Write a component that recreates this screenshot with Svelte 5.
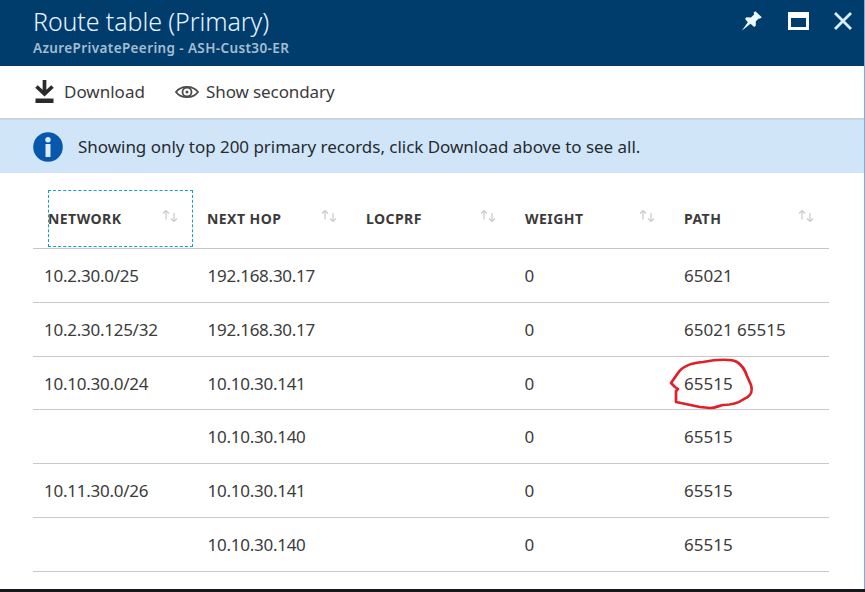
<script>
  const columns = ['NETWORK', 'NEXT HOP', 'LOCPRF', 'WEIGHT', 'PATH'];
  const rows = [
    ['10.2.30.0/25', '192.168.30.17', '', '0', '65021'],
    ['10.2.30.125/32', '192.168.30.17', '', '0', '65021 65515'],
    ['10.10.30.0/24', '10.10.30.141', '', '0', '65515'],
    ['', '10.10.30.140', '', '0', '65515'],
    ['10.11.30.0/26', '10.10.30.141', '', '0', '65515'],
    ['', '10.10.30.140', '', '0', '65515']
  ];
</script>

<main class="blade">
  <header class="titlebar">
    <div class="titles">
      <h1>Route table (Primary)</h1>
      <p>AzurePrivatePeering - ASH-Cust30-ER</p>
    </div>
    <div class="controls">
      <svg width="22" height="22" viewBox="0 0 22 22" fill="#eef8ff">
        <path d="M14.4 1.2 20.8 7.3 18.8 8.8 17.7 8.5 14.8 11.6 14.8 15.6 13.2 17 9.5 13.8 0.8 20.7 6.8 12.2 4 8.8 5.6 7.3 9.9 7.6 13.1 4.5 12.7 2.6Z" />
      </svg>
      <svg width="21" height="18" viewBox="0 0 21 18">
        <path d="M0 0H21V18H0ZM3 6V15H18V6Z" fill="#fff" fill-rule="evenodd" />
      </svg>
      <svg width="18" height="18" viewBox="0 0 18 18">
        <path d="M1 1 17 17M17 1 1 17" stroke="#d9efff" stroke-width="2.8" />
      </svg>
    </div>
  </header>

  <nav class="toolbar">
    <button class="download">
      <svg width="19" height="24" viewBox="0 0 19 24">
        <path d="M9.5 0V14M1.5 6.5 9.5 14 17.5 6.5" fill="none" stroke="#2a2a2a" stroke-width="3.7" />
        <rect x=".5" y="18.5" width="18" height="4.5" fill="#2a2a2a" />
      </svg>
      <span>Download</span>
    </button>
    <button class="secondary">
      <svg width="24" height="14" viewBox="0 0 24 14" fill="none" stroke="#4c4c4c" stroke-width="1.8">
        <path d="M1 7C6 .1 18 .1 23 7C18 13.9 6 13.9 1 7Z" />
        <circle cx="12" cy="7" r="4.5" />
        <circle cx="12" cy="7" r="1.5" fill="#4c4c4c" stroke="none" />
      </svg>
      <span>Show secondary</span>
    </button>
  </nav>

  <section class="notice">
    <svg width="30" height="30" viewBox="0 0 30 30">
      <circle cx="15" cy="15" r="14.8" fill="#0757ad" />
      <circle cx="15" cy="7.8" r="2.7" fill="#dcecfb" />
      <path d="M12.5 12H17.5V25H12.5Z" fill="#dcecfb" />
    </svg>
    <span>Showing only top 200 primary records, click Download above to see all.</span>
  </section>

  <section class="grid">
    <div class="head">
      {#each columns as label, i}
        <div class="heading" class:focused={i === 0}>
          <span>{label}</span>
          <svg width="16" height="14" viewBox="0 0 16 14" fill="none" stroke="#cacaca" stroke-width="1.2">
            <path d="M4 10.5V1.5M1 4.5 4 1.5 7 4.5M12 4V12.5M9 9.5 12 12.5 15 9.5" />
          </svg>
        </div>
      {/each}
    </div>
    {#each rows as row, r}
      <div class="row">
        {#each row as value, c}
          <div class="cell" class:address={c < 2}>
            <span>{value}</span>
            {#if r === 2 && c === 4}
              <svg class="mark" width="86" height="54" viewBox="0 0 86 54">
                <path d="M6 30 2 26 9 16C13 10 21 6 34 5C49 2 63 2 68 5C73 8 76 13 78 19L82 28C84 35 82 39 75 42C68 47 62 48 54 48C49 49 47 51 41 51L31 50 7 45V34L9 32 6 30" fill="none" stroke="#df2028" stroke-width="2.7" stroke-linejoin="round" />
              </svg>
            {/if}
          </div>
        {/each}
      </div>
    {/each}
  </section>
</main>

<style>
  .blade {
    box-sizing: border-box;
    width: 865px;
    height: 592px;
    overflow: hidden;
    display: flex;
    flex-direction: column;
    position: relative;
    background: #fff;
    border-bottom: 3px solid #17171b;
    color: #3b3b3b;
    font-family: "Noto Sans", "Open Sans", sans-serif;
    font-size: 17px;
  }
  .blade::after {
    content: "";
    position: absolute;
    top: 0;
    right: 0;
    bottom: 0;
    width: 1px;
    background: #6ab5e5;
  }
  .titlebar {
    box-sizing: border-box;
    flex: none;
    height: 66px;
    display: flex;
    justify-content: space-between;
    padding: 4px 13px 0 33px;
    background: #003d6d;
    color: #fff;
  }
  h1, p { margin: 0; white-space: nowrap; }
  h1 {
    height: 34px;
    color: #e5f3ff;
    font-size: 25px;
    font-weight: 300;
    line-height: 34px;
    letter-spacing: -0.1px;
  }
  p {
    color: #a5bdd1;
    font-size: 13.5px;
    font-weight: 600;
    line-height: 20px;
    letter-spacing: 0.38px;
  }
  .controls {
    display: flex;
    gap: 25px;
    height: 34px;
    align-items: center;
  }
  .toolbar {
    box-sizing: border-box;
    flex: none;
    height: 54px;
    display: flex;
    align-items: center;
    padding: 0 0 1px 35px;
    border-bottom: 2px solid #cbd4da;
  }
  button {
    display: flex;
    align-items: center;
    padding: 0;
    border: 0;
    background: none;
    color: #3b3b3b;
    font: inherit;
    white-space: nowrap;
  }
  .download { width: 140px; gap: 10px; }
  .secondary { gap: 7px; letter-spacing: -0.1px; }
  .notice {
    box-sizing: border-box;
    flex: none;
    height: 53px;
    display: flex;
    align-items: center;
    gap: 15px;
    padding-left: 33px;
    background: #d0e6f8;
    color: #262b30;
    white-space: nowrap;
    letter-spacing: -0.03px;
  }
  .grid { width: 796px; margin-left: 33px; }
  .head {
    box-sizing: border-box;
    height: 76px;
    display: flex;
    padding: 17px 0 0 15px;
    border-bottom: 1px solid #c5c5c5;
  }
  .heading {
    box-sizing: border-box;
    width: 145px;
    height: 57px;
    margin-right: 14px;
    flex: none;
    display: flex;
    justify-content: space-between;
    align-items: center;
    padding-right: 15px;
    font-size: 14px;
    font-weight: 700;
    letter-spacing: 0.45px;
    white-space: nowrap;
  }
  .heading svg { margin-top: -5px; }
  .focused { outline: 1.5px dashed #159fc0; outline-offset: -1px; }
  .row {
    box-sizing: border-box;
    height: 53.84px;
    display: grid;
    grid-template-columns: 163.5px 158px 159px 159.5px 1fr;
    align-items: center;
    border-bottom: 1px solid #c9c9c9;
    padding-left: 11px;
  }
  .cell { position: relative; white-space: nowrap; }
  .address { letter-spacing: -0.26px; }
  .mark { position: absolute; left: -15px; top: -15px; }
</style>
